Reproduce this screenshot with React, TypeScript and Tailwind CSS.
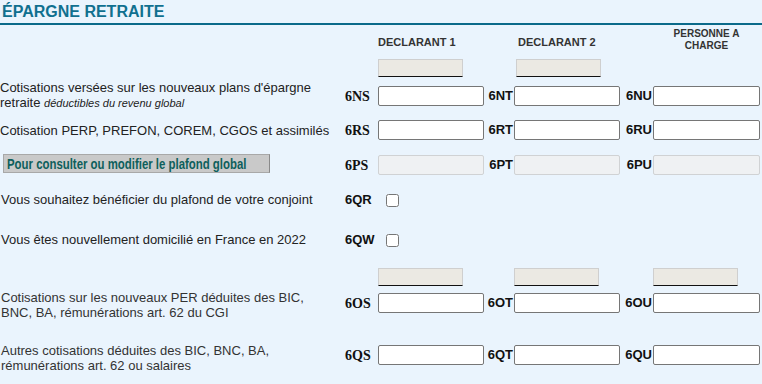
import React from "react";

// grille commune : libellé | code | D1 | code | D2 | code | PAC
const grid = "grid grid-cols-[345px_33px_106px_30px_106px_33px_107px] grid-rows-[20px] items-center";

const Field = ({ disabled }: { disabled?: boolean }) =>
  disabled ? (
    <div className="h-[20px] w-full rounded-[2px] border border-[#d0d2d4] bg-[#eff1f3]" />
  ) : (
    <input
      type="text"
      className="h-[20px] w-full rounded-[2px] border border-[#767676] bg-white px-1 text-[13px] outline-none"
    />
  );

const Header = () => <div className="h-[18px] w-[85px] border border-[#cfcfcf] border-b-[#111] bg-[#ebe9e3]" />;

const SerifCode = ({ children }: { children: React.ReactNode }) => (
  <span className="font-['Liberation_Serif',serif] text-[14px] font-bold text-[#111]">{children}</span>
);

const Code = ({ children }: { children: React.ReactNode }) => (
  <span className="pr-[1px] text-right text-[13px] font-bold text-[#111]">{children}</span>
);

const InputRow = ({
  label,
  codes,
  disabled,
  className = "",
}: {
  label: React.ReactNode;
  codes: [string, string, string];
  disabled?: boolean;
  className?: string;
}) => (
  <div className={`${grid} h-[20px] ${className}`}>
    <div className="text-[13px] leading-[15px] text-[#222]">{label}</div>
    <SerifCode>{codes[0]}</SerifCode>
    <Field disabled={disabled} />
    <Code>{codes[1]}</Code>
    <Field disabled={disabled} />
    <Code>{codes[2]}</Code>
    <Field disabled={disabled} />
  </div>
);

const CheckRow = ({ label, code, className = "" }: { label: string; code: string; className?: string }) => (
  <div className={`${grid} h-[20px] ${className}`}>
    <div className="pl-[1px] text-[13px] text-[#222]">{label}</div>
    <Code>
      <span className="block text-left">{code}</span>
    </Code>
    <div className="flex items-center">
      <input type="checkbox" className="m-0 ml-[8px] h-[13px] w-[13px]" />
    </div>
  </div>
);

export default function App() {
  return (
    <div className="h-[384px] w-[762px] overflow-hidden bg-[#eaf4fd] font-['Liberation_Sans',Arial,sans-serif]">
      <div className="h-[25px] border-b-2 border-[#0b6a8a] pl-[2px] pt-[3px] text-[16px] font-bold leading-[18px] text-[#10708f]">
        ÉPARGNE RETRAITE
      </div>

      <div className="grid h-[33px] grid-cols-[345px_33px_106px_30px_106px_33px_107px] items-center text-[11px] font-bold text-[#333]">
        <div />
        <div />
        <div className="pt-[1px]">DECLARANT 1</div>
        <div />
        <div className="pl-[4px] pt-[1px]">DECLARANT 2</div>
        <div />
        <div className="pb-[3px] text-center text-[10px] leading-[12px]">
          PERSONNE A<br />
          CHARGE
        </div>
      </div>

      <div className="mt-[1px] grid h-[18px] grid-cols-[345px_33px_106px_30px_106px_33px_107px]">
        <div />
        <div />
        <Header />
        <div />
        <div className="pl-[2px]">
          <Header />
        </div>
        <div />
        <div />
      </div>

      <InputRow
        className="mt-[9px]"
        codes={["6NS", "6NT", "6NU"]}
        label={
          <div className="-mt-[2px]">
            Cotisations versées sur les nouveaux plans d'épargne
            <br />
            retraite <i className="text-[11px]">déductibles du revenu global</i>
          </div>
        }
      />

      <InputRow className="mt-[14px]" codes={["6RS", "6RT", "6RU"]} label="Cotisation PERP, PREFON, COREM, CGOS et assimilés" />

      <InputRow
        className="mt-[15px]"
        disabled
        codes={["6PS", "6PT", "6PU"]}
        label={
          <button className="ml-[3px] -mt-[3px] block h-[19px] w-[267px] overflow-hidden whitespace-nowrap border border-[#a8a8a8] border-r-[#8a8a8a] bg-[#c9c9c9] pl-[3px] text-left text-[15px] font-bold leading-[17px] text-[#0e5f5c]">
            <span className="inline-block origin-left scale-x-[0.76]">Pour consulter ou modifier le plafond global</span>
          </button>
        }
      />

      <CheckRow className="mt-[15px]" code="6QR" label="Vous souhaitez bénéficier du plafond de votre conjoint" />
      <CheckRow className="mt-[20px]" code="6QW" label="Vous êtes nouvellement domicilié en France en 2022" />

      <div className="mt-[18px] grid h-[17px] grid-cols-[345px_33px_106px_30px_106px_33px_107px]">
        <div />
        <div />
        <Header />
        <div />
        <div>
          <Header />
        </div>
        <div />
        <Header />
      </div>

      <InputRow
        className="mt-[8px]"
        codes={["6OS", "6OT", "6OU"]}
        label={
          <div className="pl-[1px] pt-[4px] text-[#333]">
            Cotisations sur les nouveaux PER déduites des BIC,
            <br />
            BNC, BA, rémunérations art. 62 du CGI
          </div>
        }
      />

      <InputRow
        className="mt-[32px]"
        codes={["6QS", "6QT", "6QU"]}
        label={
          <div className="pl-[1px] pt-[6px] text-[#333]">
            Autres cotisations déduites des BIC, BNC, BA,
            <br />
            rémunérations art. 62 ou salaires
          </div>
        }
      />
    </div>
  );
}
